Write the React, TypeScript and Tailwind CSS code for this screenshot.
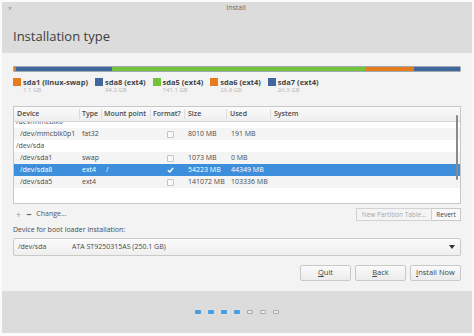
import React from "react";

const font = { fontFamily: '"Open Sans", "Noto Sans", sans-serif' };

function Check({ checked }: { checked?: boolean }) {
  if (checked)
    return (
      <div className="w-[7px] h-[7px] flex items-center justify-center">
        <svg width="8" height="8" viewBox="0 0 8 8">
          <path d="M1 4.2 L3.2 6.3 L7 1.5" stroke="#fff" strokeWidth="1.6" fill="none" />
        </svg>
      </div>
    );
  return <div className="w-[7px] h-[7px] border border-[#c4c4c4] bg-[#fafafa] rounded-[1px]" />;
}

type Row = {
  dev: string;
  indent?: boolean;
  type?: string;
  mount?: string;
  fmt?: boolean;
  checked?: boolean;
  size?: string;
  used?: string;
  sel?: boolean;
};

const rows: Row[] = [
  { dev: "/dev/mmcblk0p1", indent: true, type: "fat32", fmt: true, size: "8010 MB", used: "191 MB" },
  { dev: "/dev/sda" },
  { dev: "/dev/sda1", indent: true, type: "swap", fmt: true, size: "1073 MB", used: "0 MB" },
  { dev: "/dev/sda8", indent: true, type: "ext4", mount: "/", fmt: true, checked: true, size: "54223 MB", used: "44349 MB", sel: true },
  { dev: "/dev/sda5", indent: true, type: "ext4", fmt: true, size: "141072 MB", used: "103336 MB" },
];

function TableRow({ r, i }: { r: Row; i: number }) {
  const base = r.sel
    ? "bg-[#3d8fdb] text-white"
    : i % 2 === 0
    ? "bg-[#f4f4f4] text-[#4a4a4a]"
    : "bg-white text-[#4a4a4a]";
  return (
    <div className={`flex h-[12px] items-center text-[7px] whitespace-nowrap ${base}`}>
      <div className={`w-[66px] shrink-0 ${r.indent ? "pl-[6px]" : "pl-[2px]"}`}>{r.dev}</div>
      <div className="w-[22px] shrink-0 pl-[2px]">{r.type}</div>
      <div className="w-[49px] shrink-0 pl-[4px]">{r.mount}</div>
      <div className="w-[34px] shrink-0 flex justify-center pl-[4px]">{r.fmt && <Check checked={r.checked} />}</div>
      <div className="w-[42px] shrink-0 pl-[3px]">{r.size}</div>
      <div className="w-[44px] shrink-0 pl-[4px]">{r.used}</div>
      <div className="flex-1" />
    </div>
  );
}

function Legend({ color, name, size }: { color: string; name: string; size: string }) {
  return (
    <div className="flex items-start gap-[2px]">
      <div className={`w-[8px] h-[8px] mt-[1px] ${color}`} />
      <div className="flex flex-col">
        <div className="text-[7.5px] leading-[10px] font-bold text-[#444] whitespace-nowrap">{name}</div>
        <div className="text-[6px] leading-[7px] text-[#b5b5b5]">{size}</div>
      </div>
    </div>
  );
}

function Btn({ children, w }: { children: React.ReactNode; w: string }) {
  return (
    <div
      className={`${w} h-[16px] flex items-center justify-center border border-[#c9c9c9] rounded-[2px] bg-gradient-to-b from-[#fafafa] to-[#ececec] text-[7.5px] text-[#444]`}
    >
      {children}
    </div>
  );
}

export default function App() {
  return (
    <div className="w-[474px] h-[336px] bg-[#fbfbfb] pt-[2px] pb-[3px] px-[2px] overflow-hidden" style={font}>
      <div className="h-[331px] flex flex-col bg-[#f3f3f3]">
        {/* header */}
        <div className="h-[51px] bg-[#dcdcdc] flex flex-col shrink-0">
          <div className="h-[13px] flex items-center relative">
            <div className="pl-[6px] text-[7px] text-[#8a8a8a] leading-none">×</div>
            <div className="flex-1 text-center text-[7px] text-[#6a6a6a] pr-[12px]">Install</div>
          </div>
          <div className="pl-[11px] pt-[12px] text-[13px] leading-[18px] text-[#3e3e3e]">Installation type</div>
        </div>

        {/* content */}
        <div className="flex-1 flex flex-col px-[11px] pt-[13px]">
          {/* partition bar */}
          <div className="h-[6px] flex border border-[#a0a8b0] rounded-[1px] overflow-hidden">
            <div className="w-[2px] bg-[#e67c1e]" />
            <div className="w-[96px] bg-[#41679e]" />
            <div className="w-[254px] bg-[#72c23a]" />
            <div className="w-[48px] bg-[#e67c1e]" />
            <div className="flex-1 bg-[#41679e]" />
          </div>
          <div className="flex gap-[7px] mt-[5px] h-[22px]">
            <Legend color="bg-[#e67c1e]" name="sda1 (linux-swap)" size="1.1 GB" />
            <Legend color="bg-[#41679e]" name="sda8 (ext4)" size="94.2 GB" />
            <Legend color="bg-[#72c23a]" name="sda5 (ext4)" size="141.1 GB" />
            <Legend color="bg-[#e67c1e]" name="sda6 (ext4)" size="26.8 GB" />
            <Legend color="bg-[#41679e]" name="sda7 (ext4)" size="26.3 GB" />
          </div>

          {/* table */}
          <div className="mt-[7px] h-[98px] border border-[#c8c8c8] bg-white flex flex-col relative">
            <div className="h-[15px] flex items-center text-[7px] font-semibold text-[#4a4a4a] bg-gradient-to-b from-[#fbfbfb] to-[#eeeeee] border-b border-[#d6d6d6] shrink-0 whitespace-nowrap">
              <div className="w-[66px] shrink-0 pl-[3px] border-r border-[#dcdcdc]">Device</div>
              <div className="w-[22px] shrink-0 pl-[2px] border-r border-[#dcdcdc]">Type</div>
              <div className="w-[49px] shrink-0 pl-[2px] border-r border-[#dcdcdc]">Mount point</div>
              <div className="w-[34px] shrink-0 pl-[2px] border-r border-[#dcdcdc]">Format?</div>
              <div className="w-[42px] shrink-0 pl-[3px] border-r border-[#dcdcdc]">Size</div>
              <div className="w-[44px] shrink-0 pl-[3px] border-r border-[#dcdcdc]">Used</div>
              <div className="flex-1 pl-[3px]">System</div>
            </div>
            <div className="flex-1 overflow-hidden">
              <div className="flex h-[12px] items-center text-[7px] text-[#4a4a4a] bg-white mt-[-6px]">
                <div className="pl-[2px]">/dev/mmcblk0</div>
              </div>
              {rows.map((r, i) => (
                <TableRow key={i} r={r} i={i} />
              ))}
            </div>
            <div className="absolute right-[2px] top-[8px] w-[2px] h-[65px] bg-[#8a8a8a] rounded-full" />
          </div>

          {/* tools row */}
          <div className="mt-[4px] h-[13px] flex items-center">
            <div className="flex items-center gap-[5px] pl-[3px] text-[#777]">
              <span className="text-[9px] leading-none text-[#999]">+</span>
              <span className="text-[9px] leading-none font-bold text-[#555]">−</span>
              <span className="text-[7px] text-[#555]">Change...</span>
            </div>
            <div className="flex-1" />
            <div className="h-[13px] w-[76px] flex items-center justify-center border border-[#d2d2d2] bg-[#f4f4f4] text-[6.5px] text-[#a8a8a8] whitespace-nowrap">
              New Partition Table...
            </div>
            <div className="h-[13px] w-[29px] flex items-center justify-center border border-l-0 border-[#c9c9c9] bg-[#f8f8f8] text-[6.5px] text-[#444]">
              Revert
            </div>
          </div>

          <div className="mt-[4px] text-[7px] leading-[10px] text-[#4a4a4a]">Device for boot loader installation:</div>

          <div className="mt-[3px] h-[18px] border border-[#cacaca] rounded-[2px] bg-gradient-to-b from-[#fafafa] to-[#efefef] flex items-center text-[7px] text-[#4a4a4a]">
            <div className="w-[58px] pl-[4px]">/dev/sda</div>
            <div className="flex-1">ATA ST9250315AS (250.1 GB)</div>
            <svg width="6" height="4" viewBox="0 0 6 4" className="mr-[5px]">
              <path d="M0 0 L6 0 L3 4 Z" fill="#333" />
            </svg>
          </div>

          <div className="mt-[9px] flex justify-end gap-[4px]">
            <Btn w="w-[51px]">
              <span><span className="underline">Q</span>uit</span>
            </Btn>
            <Btn w="w-[51px]">
              <span><span className="underline">B</span>ack</span>
            </Btn>
            <Btn w="w-[51px]">
              <span><span className="underline">I</span>nstall Now</span>
            </Btn>
          </div>
        </div>

        {/* footer */}
        <div className="h-[42px] bg-[#dcdcdc] flex items-center justify-center gap-[7px] shrink-0">
          {[0, 1, 2, 3, 4, 5, 6].map((i) =>
            i < 4 ? (
              <div key={i} className="w-[6px] h-[4px] bg-[#4a9de0] rounded-[1px]" />
            ) : (
              <div key={i} className="w-[6px] h-[4px] border border-[#a8a8a8] bg-[#ececec] rounded-[1px]" />
            )
          )}
        </div>
      </div>
    </div>
  );
}
